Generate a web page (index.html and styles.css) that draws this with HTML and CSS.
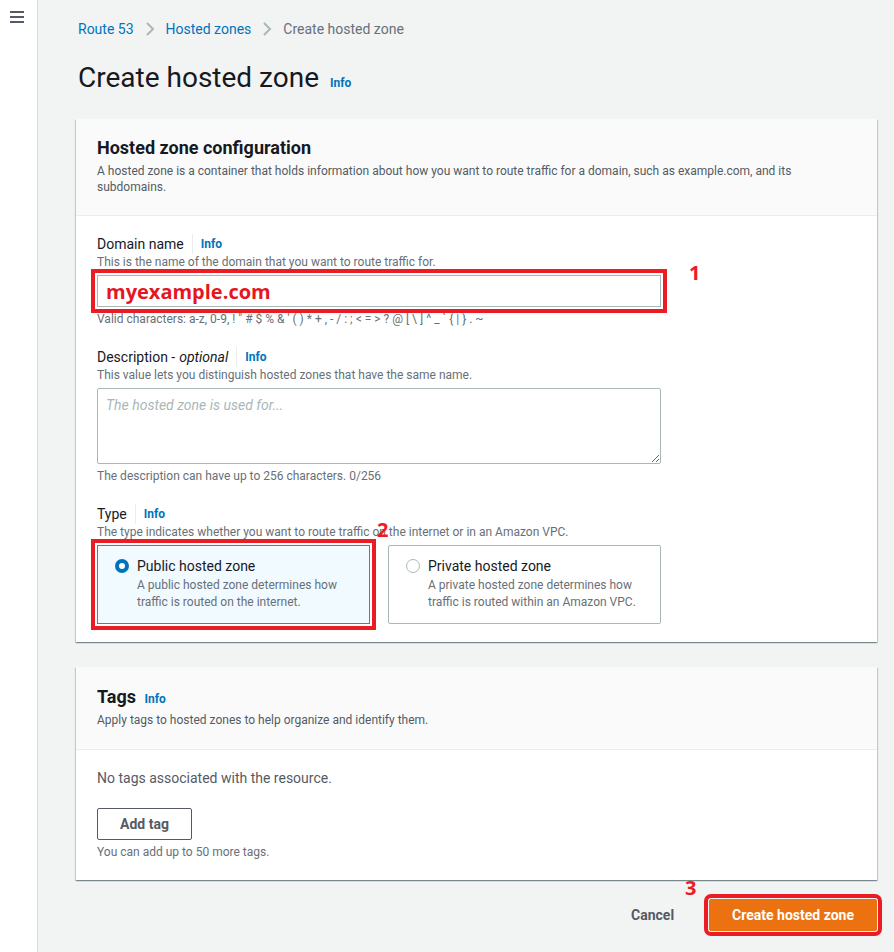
FILE: index.html
```html
<!DOCTYPE html>
<html lang="en">
  <head>
    <meta charset="UTF-8" />
    <meta name="viewport" content="width=device-width, initial-scale=1.0" />
    <title>Create hosted zone | Route 53</title>
    <link rel="stylesheet" href="styles.css">
  </head>
  <body>
    <nav class="sidebar">
      <button class="menu" aria-label="Open navigation">
        <svg width="14" height="12" viewBox="0 0 14 12"><path d="M0 1h14M0 6h14M0 11h14" stroke="#545b64" stroke-width="2" /></svg>
      </button>
    </nav>

    <main class="content">
      <ul class="crumbs">
        <li><a href="#">Route 53</a></li>
        <li class="chev"><svg width="16" height="16" viewBox="0 0 16 16"><path d="M5 2l6 6-6 6" fill="none" stroke="#aab7b8" stroke-width="2" /></svg></li>
        <li><a href="#">Hosted zones</a></li>
        <li class="chev"><svg width="16" height="16" viewBox="0 0 16 16"><path d="M5 2l6 6-6 6" fill="none" stroke="#aab7b8" stroke-width="2" /></svg></li>
        <li class="current">Create hosted zone</li>
      </ul>

      <h1 class="page-title">Create hosted zone <a class="info" href="#">Info</a></h1>

      <section class="panel">
        <div class="panel-head">
          <h2>Hosted zone configuration</h2>
          <p>A hosted zone is a container that holds information about how you want to route traffic for a domain, such as example.com, and its subdomains.</p>
        </div>
        <div class="panel-body">
          <div class="field">
            <div class="label">Domain name <span class="sep"></span><a class="info" href="#">Info</a></div>
            <div class="hint">This is the name of the domain that you want to route traffic for.</div>
            <input class="input marked" type="text" value="myexample.com" />
            <div class="hint after">Valid characters: a-z, 0-9, ! " # $ % &amp; ' ( ) * + , - / : ; &lt; = &gt; ? @ [ \ ] ^ _ ` { | } . ~</div>
          </div>

          <div class="field">
            <div class="label">Description - <i>optional</i> <span class="sep"></span><a class="info" href="#">Info</a></div>
            <div class="hint">This value lets you distinguish hosted zones that have the same name.</div>
            <textarea class="input area" placeholder="The hosted zone is used for..."></textarea>
            <div class="hint after">The description can have up to 256 characters. 0/256</div>
          </div>

          <div class="field">
            <div class="label">Type <span class="sep"></span><a class="info" href="#">Info</a></div>
            <div class="hint">The type indicates whether you want to route traffic on the internet or in an Amazon VPC.</div>
            <div class="cards">
              <label class="card selected marked">
                <span class="radio"></span>
                <span>
                  <span class="card-title">Public hosted zone</span>
                  <span class="card-desc">A public hosted zone determines how traffic is routed on the internet.</span>
                </span>
              </label>
              <label class="card">
                <span class="radio"></span>
                <span>
                  <span class="card-title">Private hosted zone</span>
                  <span class="card-desc">A private hosted zone determines how traffic is routed within an Amazon VPC.</span>
                </span>
              </label>
            </div>
          </div>
        </div>
      </section>

      <section class="panel">
        <div class="panel-head tags-head">
          <h2>Tags <a class="info" href="#">Info</a></h2>
          <p>Apply tags to hosted zones to help organize and identify them.</p>
        </div>
        <div class="panel-body tags-body">
          <div class="empty">No tags associated with the resource.</div>
          <button class="btn">Add tag</button>
          <div class="hint after">You can add up to 50 more tags.</div>
        </div>
      </section>

      <div class="actions">
        <button class="btn link">Cancel</button>
        <button class="btn primary marked">Create hosted zone</button>
      </div>
    </main>

    <span class="step s1">1</span>
    <span class="step s2">2</span>
    <span class="step s3">3</span>
  </body>
</html>
```

FILE: styles.css
```css
* {
  box-sizing: border-box;
}
body {
  margin: 0;
  display: flex;
  min-height: 100vh;
  position: relative;
  background: #f2f3f3;
  color: #16191f;
  font-family: Roboto, "Noto Sans", Arial, sans-serif;
  font-size: 14px;
  line-height: 20px;
}
a {
  color: #0073bb;
  text-decoration: none;
}

.sidebar {
  width: 38px;
  flex: none;
  background: #fff;
  border-right: 1px solid #d5dbdb;
  padding: 11px 0 0 10px;
}
.menu {
  all: unset;
  display: block;
  line-height: 0;
}

.content {
  flex: 1;
  padding: 19px 17px 14px 38px;
}

.crumbs {
  display: flex;
  align-items: center;
  list-style: none;
  margin: 0;
  padding: 0 0 0 2px;
}
.chev {
  margin: 0 8px;
  line-height: 0;
}
.current {
  color: #687078;
}

.page-title {
  margin: 21px 0 23px 2px;
  font-size: 28px;
  line-height: 36px;
  font-weight: 400;
}
.info {
  font-size: 12px;
  font-weight: 700;
  line-height: 1;
  margin-left: 4px;
}

.panel {
  background: #fff;
  box-shadow: 0 1px 1px 0 rgba(0, 28, 36, 0.3), 1px 1px 1px 0 rgba(0, 28, 36, 0.15), -1px 1px 1px 0 rgba(0, 28, 36, 0.15);
  margin-bottom: 25px;
}
.panel-head {
  background: #fafafa;
  border-bottom: 1px solid #eaeded;
  padding: 18px 21px 20px;
}
.tags-head {
  padding: 19px 21px 21px;
}
.panel-head h2 {
  margin: 0;
  font-size: 18px;
  line-height: 22px;
  font-weight: 700;
}
.panel-head p {
  margin: 4px 0 0;
  font-size: 12px;
  line-height: 16px;
  color: #545b64;
}
.panel-body {
  padding: 18px 21px 18px;
}
.tags-body {
  padding-bottom: 20px;
}

.field + .field {
  margin-top: 20px;
}
.label {
  display: flex;
  align-items: center;
}
.label i {
  margin-left: 4px;
}
.sep {
  display: inline-block;
  width: 1px;
  height: 20px;
  background: #eaeded;
  margin: 0 4px 0 8px;
}
.hint {
  font-size: 12px;
  line-height: 16px;
  color: #687078;
}
.hint.after {
  margin-top: 4px;
}

.input {
  display: block;
  width: 564px;
  margin-top: 5px;
  border: 1px solid #aab7b8;
  border-radius: 2px;
  font-family: inherit;
  background: #fff;
}
input.input {
  height: 32px;
  padding: 0 8px;
  color: #e5161f;
  font-family: "Open Sans", "Noto Sans", sans-serif;
  font-size: 20px;
  font-weight: 700;
}
.area {
  height: 76px;
  padding: 6px 8px;
  font-size: 14px;
  line-height: 20px;
  resize: vertical;
}
.area::placeholder {
  color: #aab7b8;
  font-style: italic;
}

.marked {
  outline: 4px solid #ec1c24;
  outline-offset: 2px;
  border-radius: 0;
}

.cards {
  display: flex;
  gap: 18px;
  width: 564px;
  margin-top: 5px;
}
.card {
  flex: 1;
  display: flex;
  gap: 8px;
  align-items: flex-start;
  border: 1px solid #aab7b8;
  border-radius: 2px;
  padding: 10px 17px 12px;
}
.card.selected {
  background: #f1faff;
  border-color: #00a1c9;
  border-radius: 0;
}
.radio {
  flex: none;
  width: 14px;
  height: 14px;
  margin-top: 3px;
  border-radius: 50%;
  border: 1px solid #aab7b8;
  background: #fff;
}
.selected .radio {
  border: 4px solid #0073bb;
}
.card-title {
  display: block;
}
.card-desc {
  display: block;
  margin-top: 1px;
  font-size: 12px;
  line-height: 17px;
  color: #687078;
}

.empty {
  color: #545b64;
}
.btn {
  font-family: inherit;
  font-size: 14px;
  font-weight: 700;
  line-height: 20px;
  color: #545b64;
  background: #fff;
  border: 1px solid #545b64;
  border-radius: 2px;
  padding: 5px 22px;
  margin-top: 20px;
  cursor: pointer;
}
.actions {
  display: flex;
  justify-content: flex-end;
  align-items: center;
  gap: 12px;
  margin-top: -6px;
}
.actions .btn {
  margin-top: 0;
}
.btn.link {
  border-color: transparent;
  background: none;
}
.btn.primary {
  background: #ec7211;
  border-color: #ec7211;
  color: #fff;
  outline-offset: 1px;
}

.step {
  position: absolute;
  color: #ec1c24;
  font-family: "Noto Sans", sans-serif;
  font-weight: 700;
  font-size: 20px;
  line-height: 20px;
}
.s1 {
  left: 689px;
  top: 263px;
}
.s2 {
  left: 377px;
  top: 520px;
}
.s3 {
  left: 685px;
  top: 878px;
}
```
